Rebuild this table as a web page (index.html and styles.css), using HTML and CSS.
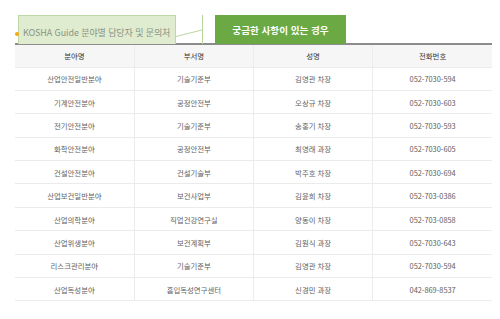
FILE: index.html
```html
<!DOCTYPE html>
<html lang="ko">
<head>
<meta charset="utf-8">
<link rel="stylesheet" href="styles.css">
</head>
<body>
<div class="wrap">
  <div class="tabs">
    <span class="dot"></span>
    <div class="label">KOSHA Guide 분야별 담당자 및 문의처</div>
    <svg class="connector" width="27" height="29" viewBox="0 0 27 29">
      <line x1="0" y1="21.5" x2="26" y2="15" stroke="#b9d6a0" stroke-width="1"/>
      <line x1="26.5" y1="0" x2="26.5" y2="29" stroke="#b9d6a0" stroke-width="1"/>
    </svg>
    <div class="tab">궁금한 사항이 있는 경우</div>
  </div>
  <table class="grid">
    <thead>
      <tr><th>분야명</th><th>부서명</th><th>성명</th><th>전화번호</th></tr>
    </thead>
    <tbody>
      <tr><td>산업안전일반분야</td><td>기술기준부</td><td>김영관 차장</td><td>052-7030-594</td></tr>
      <tr><td>기계안전분야</td><td>공정안전부</td><td>오상규 차장</td><td>052-7030-603</td></tr>
      <tr><td>전기안전분야</td><td>기술기준부</td><td>송홍기 차장</td><td>052-7030-593</td></tr>
      <tr><td>화학안전분야</td><td>공정안전부</td><td>최영래 과장</td><td>052-7030-605</td></tr>
      <tr><td>건설안전분야</td><td>건설기술부</td><td>박주호 차장</td><td>052-7030-694</td></tr>
      <tr><td>산업보건일반분야</td><td>보건사업부</td><td>김윤희 차장</td><td>052-703-0386</td></tr>
      <tr><td>산업의학분야</td><td>직업건강연구실</td><td>양동이 차장</td><td>052-703-0858</td></tr>
      <tr><td>산업위생분야</td><td>보건계획부</td><td>김원식 과장</td><td>052-7030-643</td></tr>
      <tr><td>리스크관리분야</td><td>기술기준부</td><td>김영관 차장</td><td>052-7030-594</td></tr>
      <tr><td>산업독성분야</td><td>흡입독성연구센터</td><td>신경민 과장</td><td>042-869-8537</td></tr>
    </tbody>
  </table>
</div>
</body>
</html>
```
FILE: styles.css
```css
html, body {
  margin: 0;
  padding: 0;
  background: #ffffff;
}
body {
  font-family: "Noto Sans CJK KR", "Noto Sans", sans-serif;
}
.wrap {
  padding: 15px 8px 0 15px;
  width: 477px;
}
.tabs {
  display: flex;
  align-items: stretch;
  height: 29px;
  position: relative;
  z-index: 1;
  margin-bottom: -1px;
}
.dot {
  width: 4px;
  height: 4px;
  border-radius: 50%;
  background: #f2a90c;
  align-self: center;
  margin-top: 8px;
  margin-right: -1px;
  position: relative;
  z-index: 2;
}
.label {
  width: 158px;
  box-sizing: border-box;
  background: #dfecd0;
  border: 1px solid #bcd8a4;
  border-bottom: none;
  color: #8a9384;
  font-size: 9px;
  padding: 10px 0 0 4px;
  white-space: nowrap;
  letter-spacing: -0.1px;
}
.connector {
  display: block;
}
.tab {
  margin-left: 12px;
  width: 131px;
  background: #6aa944;
  color: #ffffff;
  font-weight: bold;
  font-size: 9.6px;
  display: flex;
  align-items: center;
  justify-content: center;
  white-space: nowrap;
}
.grid {
  width: 477px;
  border-collapse: collapse;
  table-layout: fixed;
  border-top: 2px solid #8c8c8c;
  font-size: 7.4px;
}
.grid th, .grid td {
  height: 22.4px;
  padding: 0;
  text-align: center;
  vertical-align: middle;
  border-bottom: 1px solid #ebebeb;
  border-left: 1px solid #ececec;
}
.grid th:first-child, .grid td:first-child {
  border-left: none;
}
.grid th {
  background: #f6f6f6;
  color: #333333;
  font-weight: normal;
  height: 21.5px;
}
.grid td {
  color: #616161;
  background: #ffffff;
}
```
